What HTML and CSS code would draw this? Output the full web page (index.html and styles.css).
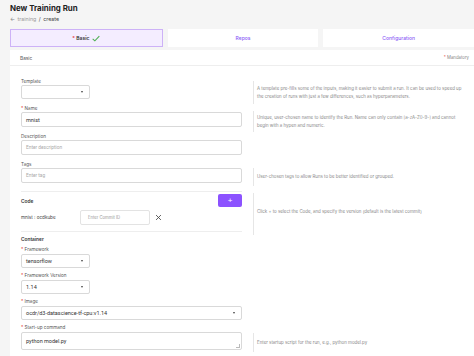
FILE: index.html
```html
<html><head><title>New Training Run</title>
<link rel="stylesheet" href="styles.css">
</head>
<body>
<div class="page">
  <h1 class="title">New Training Run</h1>
  <div class="crumbs">
    <span class="back">&larr;</span>
    <span class="crumb-link">training</span>
    <span class="sep">/</span>
    <span>create</span>
  </div>
  <div class="tabs">
    <div class="tab tab-active"><span class="req">*</span>&nbsp;Basic
      <svg class="check" viewBox="0 0 12 10"><path d="M1 5.5 L4.3 8.5 L11 1.5" /></svg>
    </div>
    <div class="tab">Repos</div>
    <div class="tab">Configuration</div>
  </div>

  <div class="card">
    <div class="card-head">
      <span>Basic</span>
      <span class="mandatory"><span class="req">*</span> Mandatory</span>
    </div>
    <div class="card-body">

      <div class="row">
        <div class="field">
          <div class="label">Template</div>
          <div class="select select-small"><span class="value"></span><span class="caret"></span></div>
        </div>
        <div class="help help-tall">A template pre-fills some of the inputs, making it easier to submit a run. It can be used to speed up the creation of runs with just a few differences, such as hyperparameters.</div>
      </div>

      <div class="row">
        <div class="field">
          <div class="label"><span class="req">*</span> Name</div>
          <div class="input">mnist</div>
        </div>
        <div class="help">Unique, user-chosen name to identify the Run. Name can only contain [a-zA-Z0-9-] and cannot begin with a hypen and numeric.</div>
      </div>

      <div class="row">
        <div class="field">
          <div class="label">Description</div>
          <div class="input placeholder">Enter description</div>
        </div>
      </div>

      <div class="row">
        <div class="field">
          <div class="label">Tags</div>
          <div class="input placeholder">Enter tag</div>
        </div>
        <div class="help help-short">User-chosen tags to allow Runs to be better identified or grouped.</div>
      </div>

      <div class="row row-code">
        <div class="code-box">
          <div class="code-head">
            <span class="section-title">Code</span>
            <button class="add-btn">+</button>
          </div>
          <div class="repo-row">
            <span class="repo-name">mnist : ocdkube</span>
            <div class="commit-input">Enter Commit ID</div>
            <svg class="remove" viewBox="0 0 10 10"><path d="M1.5 1.5 L8.5 8.5 M8.5 1.5 L1.5 8.5" /></svg>
          </div>
        </div>
        <div class="help help-code">Click + to select the Code, and specify the version (default is the latest commit)</div>
      </div>

      <div class="section-title container-title">Container</div>

      <div class="row row-tight">
        <div class="field">
          <div class="label"><span class="req">*</span> Framework</div>
          <div class="select select-small"><span class="value">tensorflow</span><span class="caret"></span></div>
        </div>
      </div>

      <div class="row row-tight">
        <div class="field">
          <div class="label"><span class="req">*</span> Framework Version</div>
          <div class="select select-small"><span class="value">1.14</span><span class="caret"></span></div>
        </div>
      </div>

      <div class="row row-tight">
        <div class="field">
          <div class="label"><span class="req">*</span> Image</div>
          <div class="select"><span class="value">ocdr/d3-datascience-tf-cpu:v1.14</span><span class="caret"></span></div>
        </div>
      </div>

      <div class="row row-tight">
        <div class="field">
          <div class="label"><span class="req">*</span> Start-up command</div>
          <div class="textarea">python model.py<span class="grip"></span></div>
        </div>
        <div class="help help-end">Enter startup script for the run, e.g., python model.py</div>
      </div>

    </div>
  </div>
</div>
</body>
</html>
```

FILE: styles.css
```css
body, html {
  margin: 0;
  padding: 0;
  height: 100%;
  overflow: hidden;
  font-family: 'Inter', 'Noto Sans', sans-serif;
  background-color: #f5f5f5;
  color: #333;
}
.page {
  padding: 3px 0 0 10px;
}
.title {
  margin: 0;
  font-size: 7.9px;
  line-height: 11px;
  font-weight: 700;
  color: #222;
}
.crumbs {
  margin-top: 1px;
  font-size: 5.3px;
  line-height: 8px;
  color: #444;
}
.crumbs .back {
  color: #888;
  margin-right: 1px;
}
.crumb-link {
  color: #999;
}
.sep {
  margin: 0 1px;
}
.tabs {
  display: flex;
  gap: 5px;
  margin-top: 6px;
  height: 18px;
}
.tab {
  flex: 1;
  display: flex;
  align-items: center;
  justify-content: center;
  background-color: #fff;
  color: #8b5cf6;
  font-size: 5px;
  font-weight: 500;
}
.tab-active {
  background-color: #f4edff;
  border: 1px solid #cdb2f7;
  color: #333;
  font-weight: 600;
}
.check {
  width: 8px;
  height: 7px;
  margin-left: 3px;
  fill: none;
  stroke: #4caf50;
  stroke-width: 1.6;
}
.req {
  color: #e53935;
}
.card {
  margin-top: 3px;
  background-color: #fff;
  height: 320px;
}
.card-head {
  display: flex;
  justify-content: space-between;
  align-items: center;
  height: 15px;
  border-bottom: 1px solid #eee;
  padding: 0 5px 0 10px;
  font-size: 4.8px;
  color: #555;
}
.mandatory {
  font-size: 4.3px;
  color: #888;
}
.card-body {
  padding: 12px 0 0 11px;
}
.row {
  display: grid;
  grid-template-columns: 221px 1fr;
  column-gap: 11px;
  margin-bottom: 6px;
}
.label {
  font-size: 4.6px;
  line-height: 7px;
  color: #555;
}
.input, .select, .textarea {
  box-sizing: border-box;
  border: 1px solid #d9d9d9;
  border-radius: 2px;
  font-family: 'Roboto', sans-serif;
  font-size: 5.5px;
  color: #333;
  padding: 0 4px;
  display: flex;
  align-items: center;
}
.input {
  height: 15px;
}
.placeholder {
  color: #aaa;
  font-size: 4.8px;
}
.select {
  height: 14px;
  justify-content: space-between;
}
.select-small {
  width: 69px;
}
.caret {
  width: 0;
  height: 0;
  border-left: 1.5px solid transparent;
  border-right: 1.5px solid transparent;
  border-top: 2px solid #444;
  margin-right: 2px;
}
.textarea {
  position: relative;
  height: 18px;
}
.grip {
  position: absolute;
  right: 1px;
  bottom: 1px;
  width: 3px;
  height: 3px;
  border-right: 1px solid #bbb;
  border-bottom: 1px solid #bbb;
}
.help {
  align-self: end;
  margin-bottom: -5px;
  min-height: 21px;
  border-left: 1px solid #e6e6e6;
  padding-left: 3px;
  display: flex;
  align-items: center;
  font-size: 4.4px;
  line-height: 8px;
  color: #888;
  margin-right: 6px;
}
.help-tall {
  min-height: 23px;
}
.help-short {
  min-height: 18px;
  margin-bottom: -3px;
}
.row-code {
  margin-top: 8px;
}
.code-box {
  border-top: 1px solid #eee;
  border-bottom: 1px solid #eee;
  padding: 2px 0 6px;
}
.code-head {
  display: flex;
  justify-content: space-between;
  align-items: center;
  height: 13px;
}
.section-title {
  font-size: 4.8px;
  font-weight: 600;
  color: #333;
}
.add-btn {
  width: 24px;
  height: 13px;
  border: none;
  border-radius: 2px;
  background-color: #8c52ff;
  color: #fff;
  font-size: 8px;
  line-height: 13px;
  padding: 0;
}
.repo-row {
  display: flex;
  align-items: center;
  margin-top: 3px;
  height: 15px;
}
.repo-name {
  width: 59px;
  font-size: 4.6px;
  color: #444;
}
.commit-input {
  box-sizing: border-box;
  width: 70px;
  height: 15px;
  border: 1px solid #e3e3e3;
  border-radius: 2px;
  padding-left: 7px;
  display: flex;
  align-items: center;
  font-size: 4.2px;
  color: #999;
}
.remove {
  width: 7px;
  height: 7px;
  margin-left: 5px;
  stroke: #444;
  stroke-width: 1.2;
}
.help-code {
  align-self: stretch;
  margin: 2px 6px -3px 0;
  align-items: flex-start;
  padding-top: 15px;
}
.container-title {
  line-height: 7px;
  margin-top: -2px;
  margin-bottom: 3px;
}
.row-tight {
  margin-bottom: 4px;
}
.row-tight .label {
  margin-bottom: 1px;
}
.help-end {
  min-height: 19px;
  margin-bottom: -2px;
}
```
